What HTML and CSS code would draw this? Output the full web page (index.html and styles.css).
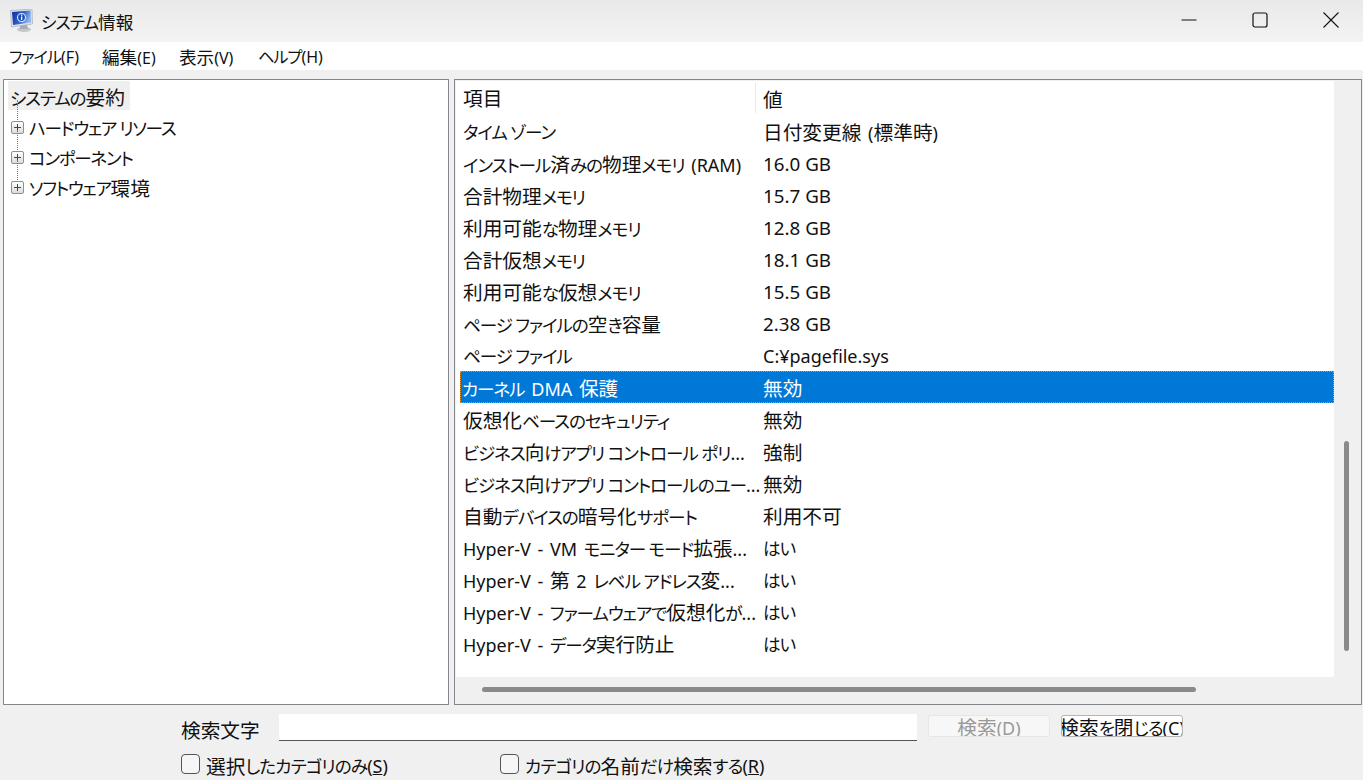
FILE: index.html
```html
<!DOCTYPE html>
<html lang="ja">

<head>
    <meta charset="UTF-8">
    <title>システム情報</title>
    <link rel="stylesheet" href="styles.css">
</head>

<body>
    <div class="titlebar">
        <svg class="app-icon" width="24" height="24" viewBox="0 0 24 24">
            <defs>
                <linearGradient id="screen" x1="0" y1="0" x2="1" y2="0.4">
                    <stop offset="0" stop-color="#0c2a96"/>
                    <stop offset="0.6" stop-color="#2f66cf"/>
                    <stop offset="1" stop-color="#8fb4ee"/>
                </linearGradient>
            </defs>
            <ellipse cx="14" cy="20.5" rx="7" ry="2.6" fill="#c4c6c9"/>
            <path d="M10 15 H17 L18 20 H10 Z" fill="#a9acb0"/>
            <path d="M0.5 1.5 L22 0 L22.5 15 L1.5 18 Z" fill="#dfe3ea" stroke="#9aa3b5" stroke-width="0.6"/>
            <path d="M2 3 L20.5 1.5 L21 13.5 L3 16 Z" fill="url(#screen)"/>
            <circle cx="11.5" cy="8.5" r="4" fill="#1d4db5" stroke="#dfe9fb" stroke-width="1.1"/>
            <rect x="11" y="7.5" width="1.3" height="3.4" fill="#fff"/>
            <rect x="11" y="5.6" width="1.3" height="1.2" fill="#fff"/>
        </svg>
        <span class="title-text">システム<span class="k">情報</span></span>
        <div class="win-buttons">
            <svg width="16" height="16" viewBox="0 0 16 16"><path d="M0.5 8 H15.5" stroke="#111" fill="none"/></svg>
            <svg width="16" height="16" viewBox="0 0 16 16"><rect x="1" y="1" width="14" height="14" rx="2" stroke="#111" stroke-width="1.2" fill="none"/></svg>
            <svg width="16" height="16" viewBox="0 0 16 16"><path d="M0.5 0.5 L15.5 15.5 M15.5 0.5 L0.5 15.5" stroke="#111" stroke-width="1.1" fill="none"/></svg>
        </div>
    </div>

    <div class="menubar">
        <span class="menu-item m1">ファイル<span class="l">(F)</span></span>
        <span class="menu-item m2"><span class="k">編集</span><span class="l">(E)</span></span>
        <span class="menu-item m3"><span class="k">表示</span><span class="l">(V)</span></span>
        <span class="menu-item">ヘルプ<span class="l">(H)</span></span>
    </div>

    <div class="panes">
        <div class="tree-pane">
            <div class="tree-root">システムの<span class="k">要約</span></div>
            <div class="tree-row"><span class="expander"></span>ハードウェア リソース</div>
            <div class="tree-row"><span class="expander"></span>コンポーネント</div>
            <div class="tree-row"><span class="expander"></span>ソフトウェア<span class="k">環境</span></div>
        </div>

        <div class="list-pane">
            <div class="list-top">
                <div class="list">
                    <div class="row head"><span class="col1"><span class="k">項目</span></span><span class="col2"><span class="k">値</span></span></div>
                    <div class="row"><span class="col1">タイム ゾーン</span><span class="col2"><span class="k">日付変更線</span><span class="l"> (</span><span class="k">標準時</span><span class="l">)</span></span></div>
                    <div class="row"><span class="col1">インストール<span class="k">済</span>みの<span class="k">物理</span>メモリ<span class="l"> (RAM)</span></span><span class="col2"><span class="n">16.0 GB</span></span></div>
                    <div class="row"><span class="col1"><span class="k">合計物理</span>メモリ</span><span class="col2"><span class="n">15.7 GB</span></span></div>
                    <div class="row"><span class="col1"><span class="k">利用可能</span>な<span class="k">物理</span>メモリ</span><span class="col2"><span class="n">12.8 GB</span></span></div>
                    <div class="row"><span class="col1"><span class="k">合計仮想</span>メモリ</span><span class="col2"><span class="n">18.1 GB</span></span></div>
                    <div class="row"><span class="col1"><span class="k">利用可能</span>な<span class="k">仮想</span>メモリ</span><span class="col2"><span class="n">15.5 GB</span></span></div>
                    <div class="row"><span class="col1">ページ ファイルの<span class="k">空</span>き<span class="k">容量</span></span><span class="col2"><span class="n">2.38 GB</span></span></div>
                    <div class="row"><span class="col1">ページ ファイル</span><span class="col2"><span class="n l">C:¥pagefile.sys</span></span></div>
                    <div class="row selected"><span class="col1">カーネル<span class="l"> DMA </span><span class="k">保護</span></span><span class="col2"><span class="k">無効</span></span></div>
                    <div class="row"><span class="col1"><span class="k">仮想化</span>ベースのセキュリティ</span><span class="col2"><span class="k">無効</span></span></div>
                    <div class="row"><span class="col1">ビジネス<span class="k">向</span>けアプリ コントロール ポリ<span class="l">...</span></span><span class="col2"><span class="k">強制</span></span></div>
                    <div class="row"><span class="col1">ビジネス<span class="k">向</span>けアプリ コントロールのユー<span class="l">...</span></span><span class="col2"><span class="k">無効</span></span></div>
                    <div class="row"><span class="col1"><span class="k">自動</span>デバイスの<span class="k">暗号化</span>サポート</span><span class="col2"><span class="k">利用不可</span></span></div>
                    <div class="row"><span class="col1"><span class="l">Hyper-V - VM </span>モニター モード<span class="k">拡張</span><span class="l">...</span></span><span class="col2">はい</span></div>
                    <div class="row"><span class="col1"><span class="l">Hyper-V - </span><span class="k">第</span><span class="l"> 2 </span>レベル アドレス<span class="k">変</span><span class="l">...</span></span><span class="col2">はい</span></div>
                    <div class="row"><span class="col1"><span class="l">Hyper-V - </span>ファームウェアで<span class="k">仮想化</span>が<span class="l">...</span></span><span class="col2">はい</span></div>
                    <div class="row"><span class="col1"><span class="l">Hyper-V - </span>データ<span class="k">実行防止</span></span><span class="col2">はい</span></div>
                </div>
                <div class="vscroll"><div class="vthumb"></div></div>
            </div>
            <div class="hscroll"><div class="hthumb"></div></div>
        </div>
    </div>

    <div class="search">
        <div class="search-line">
            <span class="search-label"><span class="k">検索文字</span></span>
            <div class="search-input"></div>
            <div class="btn disabled"><span class="k">検索</span><span class="l">(D)</span></div>
            <div class="btn"><span class="k">検索</span>を<span class="k">閉</span>じる<span class="l">(C)</span></div>
        </div>
        <div class="check-line">
            <label class="check c1"><span class="box"></span><span class="k">選択</span>したカテゴリのみ<span class="l">(<u>S</u>)</span></label>
            <label class="check"><span class="box"></span>カテゴリの<span class="k">名前</span>だけ<span class="k">検索</span>する<span class="l">(<u>R</u>)</span></label>
        </div>
    </div>
</body>

</html>
```

FILE: styles.css
```css
* {
    padding: 0;
    margin: 0;
    box-sizing: border-box;
}

html,
body {
    height: 100%;
    overflow: hidden;
}

body {
    background-color: #f0f0f0;
    color: #111;
    font-family: "Noto Sans", "Noto Sans CJK JP", sans-serif;
    font-feature-settings: "palt";
    font-size: 17.6px;
    letter-spacing: -1.1px;
}

/* 汉字比假名大一些 */
.k {
    font-size: 19.7px;
    letter-spacing: 0;
}

.l {
    font-size: 18px;
    letter-spacing: 0;
    word-spacing: 2px;
    white-space: pre;
}

.n {
    display: inline-block;
    padding-top: 2px;
    font-size: 18.8px;
    letter-spacing: 0;
}

.n.l {
    font-size: 18px;
}

.titlebar {
    display: flex;
    align-items: center;
    height: 42px;
    padding-left: 10px;
    background: linear-gradient(#e9e9e9, #f3f3f3);
}

.app-icon {
    margin-right: 7px;
}

.title-text {
    font-size: 16.8px;
    letter-spacing: -1px;
}

.title-text .k {
    font-size: 17.6px;
}

.win-buttons {
    display: flex;
    gap: 55px;
    margin-left: auto;
    padding-right: 24px;
    margin-top: -3px;
}

.menubar {
    display: flex;
    align-items: center;
    height: 28px;
    padding-left: 9px;
    background-color: #fff;
    font-size: 16.2px;
    letter-spacing: -1px;
}

.menubar .k {
    font-size: 17.6px;
}

.menubar .l {
    font-size: 16px;
}

.menu-item {
    white-space: nowrap;
}

.m1 {
    width: 93px;
}

.m2 {
    width: 77px;
}

.m3 {
    width: 79px;
}

.panes {
    display: flex;
    gap: 5px;
    height: 626px;
    margin-top: 9px;
    padding-left: 3px;
}

.tree-pane {
    width: 446px;
    padding: 1px 4px;
    background-color: #fff;
    border: 1px solid #85858c;
}

.tree-root {
    width: 122px;
    height: 29px;
    padding-left: 2px;
    line-height: 33px;
    background-color: #efefef;
    white-space: nowrap;
}

.tree-row {
    display: flex;
    align-items: center;
    position: relative;
    height: 30px;
    margin-top: 2px;
    margin-bottom: -2px;
    padding-left: 21px;
    letter-spacing: -1.3px;
    white-space: nowrap;
}

/* 虚线 */
.tree-row::before {
    content: "";
    position: absolute;
    left: 9px;
    top: -12px;
    height: 30px;
    border-left: 1px dotted #777;
}

.expander {
    position: absolute;
    left: 3px;
    top: 9px;
    width: 13px;
    height: 13px;
    border: 1px solid #8a8f99;
    border-radius: 2px;
    background: linear-gradient(#fff, #dcdcdc);
}

.expander::before,
.expander::after {
    content: "";
    position: absolute;
    background-color: #33467a;
}

.expander::before {
    left: 2px;
    right: 2px;
    top: 5px;
    height: 1px;
}

.expander::after {
    top: 2px;
    bottom: 2px;
    left: 5px;
    width: 1px;
}

.list-pane {
    display: flex;
    flex-direction: column;
    width: 908px;
    padding: 1px;
    border: 1px solid #85858c;
}

.list-top {
    display: flex;
    height: 597px;
}

.list {
    width: 878px;
    padding-left: 4px;
    background-color: #fff;
    border-radius: 0 0 3px 0;
    overflow: hidden;
}

.row {
    display: flex;
    align-items: center;
    height: 32px;
    white-space: nowrap;
}

.row.head {
    height: 34px;
}

.col1 {
    width: 303px;
    padding-left: 3px;
}

.row.head .col1 {
    height: 30px;
    line-height: 32px;
    width: 296px;
    border-right: 1px solid #e8e8e8;
    margin-right: 7px;
}

.row.selected {
    background-color: #0078d7;
    border: 1px dotted #e8912d;
    color: #fff;
}

.row.selected .col1 {
    padding-left: 1px;
    width: 302px;
}

.vscroll {
    width: 26px;
    padding: 360px 10px 0;
}

.vthumb {
    width: 5px;
    height: 210px;
    border-radius: 3px;
    background-color: #8a8a8a;
}

.hscroll {
    height: 26px;
    padding: 10px 0 0 26px;
}

.hthumb {
    width: 714px;
    height: 5px;
    border-radius: 3px;
    background-color: #8a8a8a;
}

.search {
    padding: 9px 0 0 181px;
}

.search-line {
    display: flex;
    align-items: flex-start;
    height: 37px;
}

.search-label {
    width: 98px;
    line-height: 33px;
}

.search-input {
    width: 638px;
    height: 27px;
    background-color: #fff;
    border-bottom: 1px solid #555;
}

.btn {
    display: flex;
    justify-content: center;
    align-items: baseline;
    width: 122px;
    height: 22px;
    margin-left: 11px;
    margin-top: 1px;
    line-height: 24px;
    background-color: #fff;
    border: 1px solid #b5b5b5;
    border-radius: 3px;
    white-space: nowrap;
    overflow: hidden;
}

.btn.disabled {
    color: #999;
    background-color: #f7f7f7;
    border-color: #e6e6e6;
}

.check-line {
    display: flex;
}

.check {
    display: flex;
    align-items: center;
    letter-spacing: -0.9px;
    white-space: pre;
}

.c1 {
    width: 319px;
}

.box {
    width: 19px;
    height: 20px;
    margin-right: 6px;
    margin-bottom: 4px;
    background-color: #f6f6f6;
    border: 1px solid #555;
    border-radius: 4px;
}
```
